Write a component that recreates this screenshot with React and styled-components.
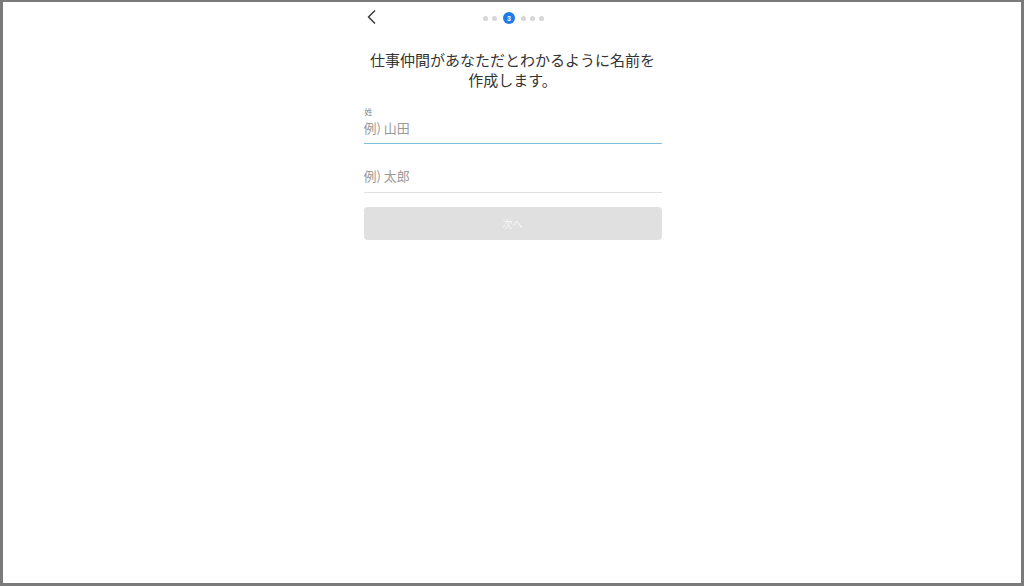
import React from 'react'
import styled, { createGlobalStyle } from 'styled-components'

const Global = createGlobalStyle`
  html, body { margin: 0; padding: 0; background: #ffffff; }
  body { font-family: "Noto Sans CJK JP", "Noto Sans", sans-serif; }
`

const Frame = styled.div`
  box-sizing: border-box;
  width: 1024px;
  height: 586px;
  border: 3px solid #7b7b7b;
  border-top-width: 2px;
  background: #ffffff;
  display: flex;
  justify-content: center;
`

const Column = styled.div`
  width: 298px;
  margin-left: 1px;
  display: flex;
  flex-direction: column;
`

const TopBar = styled.div`
  height: 30px;
  display: flex;
  align-items: center;
  position: relative;
`

const Back = styled.button`
  border: none;
  background: transparent;
  padding: 0;
  margin-left: 2px;
  width: 14px;
  height: 18px;
  display: flex;
  align-items: center;
  cursor: pointer;
`

const Steps = styled.div`
  position: absolute;
  left: 0;
  right: 0;
  top: 1px;
  height: 30px;
  display: flex;
  justify-content: center;
  align-items: center;
  gap: 4px;
  margin-left: 2px;
  pointer-events: none;
`

const Dot = styled.span`
  width: ${({ $active }) => ($active ? '12px' : '5px')};
  height: ${({ $active }) => ($active ? '12px' : '5px')};
  border-radius: 50%;
  background: ${({ $active }) => ($active ? '#1e7be8' : '#d6d6d6')};
  color: #ffffff;
  font-family: "Liberation Sans", Arial, sans-serif;
  font-size: 7px;
  font-weight: 700;
  display: flex;
  align-items: center;
  justify-content: center;
  margin: ${({ $active }) => ($active ? '0 2px' : '0')};
`

const Title = styled.h1`
  margin: 18px 0 0;
  font-size: 15px;
  font-weight: 400;
  line-height: 20px;
  color: #333333;
  text-align: center;
`

const Field = styled.label`
  display: flex;
  flex-direction: column;
  margin-top: ${({ $first }) => ($first ? '17px' : '21px')};
  border-bottom: 1px solid ${({ $focused }) => ($focused ? '#7fbfd8' : '#e2e2e2')};
  padding-bottom: ${({ $first }) => ($first ? '6px' : '7px')};
`

const Label = styled.span`
  font-size: 8px;
  line-height: 10px;
  height: 10px;
  color: #888888;
  margin-left: 1px;
`

const Input = styled.input`
  border: none;
  outline: none;
  padding: 0;
  margin-top: 2px;
  font-family: inherit;
  font-size: 13px;
  line-height: 18px;
  height: 18px;
  color: #333333;
  background: transparent;
  &::placeholder { color: #9a9a9a; }
`

const Next = styled.button`
  margin-top: 14px;
  height: 33px;
  border: none;
  border-radius: 4px;
  background: #e0e0e0;
  color: #f7f7f7;
  font-family: inherit;
  font-size: 10px;
  cursor: default;
`

const App = () => {
  return (
    <>
      <Global />
      <Frame>
        <Column>
          <TopBar>
            <Back aria-label="back">
              <svg width="12" height="16" viewBox="0 0 12 16">
                <path d="M9 1.5 L2.5 8 L9 14.5" fill="none" stroke="#333" strokeWidth="1.4" />
              </svg>
            </Back>
            <Steps>
              <Dot />
              <Dot />
              <Dot $active>3</Dot>
              <Dot />
              <Dot />
              <Dot />
            </Steps>
          </TopBar>
          <Title>
            仕事仲間があなただとわかるように名前を
            <br />
            作成します。
          </Title>
          <Field $first $focused>
            <Label>姓</Label>
            <Input placeholder="例) 山田" />
          </Field>
          <Field>
            <Input placeholder="例) 太郎" />
          </Field>
          <Next disabled>次へ</Next>
        </Column>
      </Frame>
    </>
  )
}

export default App
